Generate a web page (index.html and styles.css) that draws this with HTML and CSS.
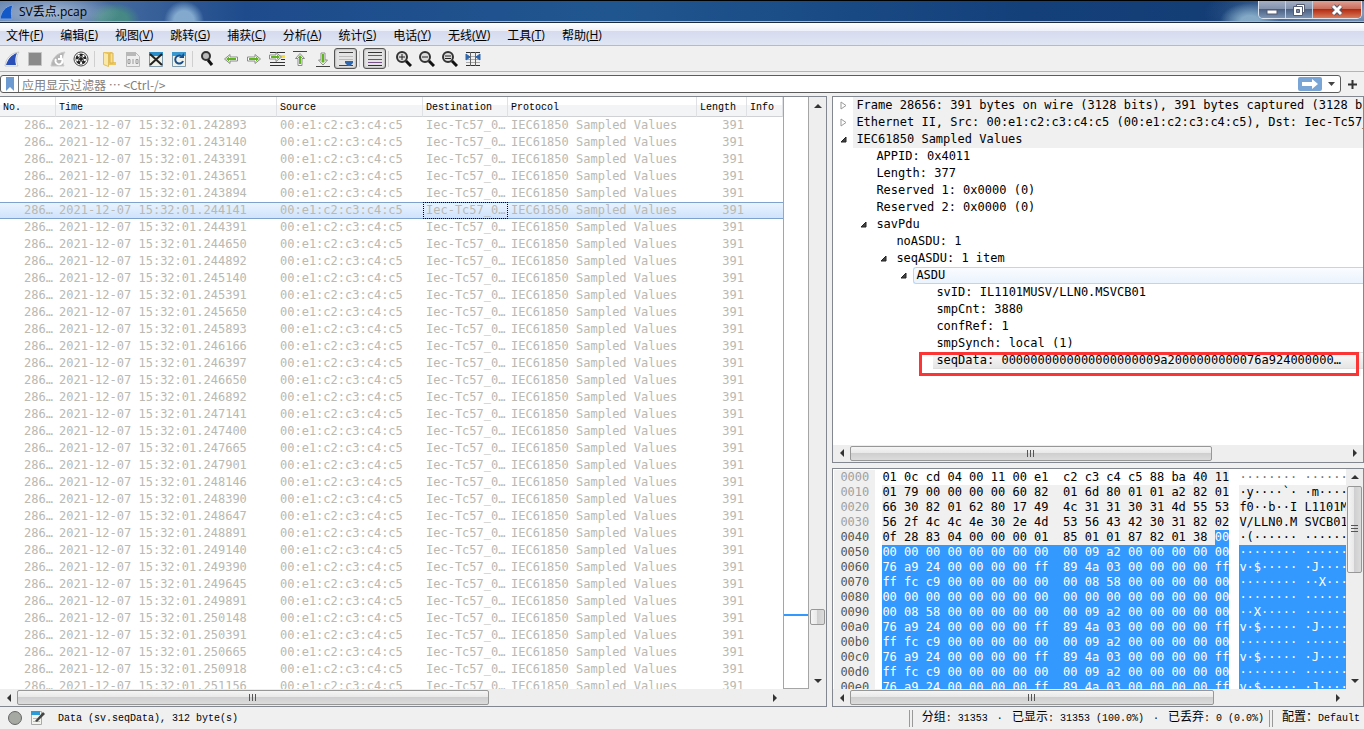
FILE: index.html
```html
<!DOCTYPE html>
<html lang="zh-CN">
<head>
  <meta charset="UTF-8">
  <title>SV丢点.pcap</title>
  <link rel="stylesheet" href="styles.css">
</head>
<body>

  <header class="titlebar">
    <svg class="app-icon" width="14" height="16" viewBox="0 0 14 16"><path d="M0 15C1 8 5 2 13 1c-2 4-2 9-1 14z" fill="#1459c8" stroke="#7fa3dc"/></svg>
    <h1 class="title">SV丢点.pcap</h1>
    <div class="window-buttons">
      <button class="win-btn" aria-label="最小化"><svg width="12" height="12"><rect x="1" y="6" width="10" height="4" fill="#fff" stroke="#555b70"/></svg></button>
      <button class="win-btn" aria-label="还原"><svg width="14" height="14"><path d="M4.500 1.500h8v8h-8z" fill="#fff" stroke="#555b70"/><path d="M1.500 3.500h9v9h-9z" fill="#fff" stroke="#555b70"/><path d="M4.500 6.500h3v3h-3z" fill="#7f8aa5" stroke="#555b70"/></svg></button>
      <button class="win-btn win-close" aria-label="关闭"><svg width="14" height="12"><path d="M3 2l8 8M11 2l-8 8" stroke="#555b70" stroke-width="5"/><path d="M3 2l8 8M11 2l-8 8" stroke="#fff" stroke-width="3"/></svg></button>
    </div>
  </header>

  <nav class="menubar">
    <button>文件(<u>F</u>)</button>
    <button>编辑(<u>E</u>)</button>
    <button>视图(<u>V</u>)</button>
    <button>跳转(<u>G</u>)</button>
    <button>捕获(<u>C</u>)</button>
    <button>分析(<u>A</u>)</button>
    <button>统计(<u>S</u>)</button>
    <button>电话(<u>Y</u>)</button>
    <button>无线(<u>W</u>)</button>
    <button>工具(<u>T</u>)</button>
    <button>帮助(<u>H</u>)</button>
  </nav>

  <div class="toolbar">
    <button aria-label="开始捕获"><svg width="16" height="16"><path d="M1 15C2 8 6 2 15 1c-3 4-3 10-1 14z" fill="#fff" stroke="#c9c9c9"/><path d="M2 14C4 8 7 4 13 2c-2 4-2 8-1 12z" fill="#2a50b8"/></svg></button>
    <button aria-label="停止捕获"><svg width="16" height="16"><path d="M1.500 1.500h13v13h-13z" fill="#8a8a8a" stroke="#c4c4c4"/></svg></button>
    <button aria-label="重新开始捕获"><svg width="16" height="16"><path d="M1 15C2 8 6 2 15 1c-3 4-3 10-1 14z" fill="#b5b5b5" stroke="#c9c9c9"/><path d="M6 8a3.500 3.500 0 1 0 5-1M11 4v4h-3" fill="none" stroke="#fff" stroke-width="2"/></svg></button>
    <button aria-label="捕获选项"><svg width="16" height="16"><circle cx="8" cy="8" r="7" fill="#fff" stroke="#444"/><circle cx="8" cy="8" r="4" fill="none" stroke="#222" stroke-width="3"/><circle cx="8" cy="8" r="4" fill="none" stroke="#fff" stroke-width="2" stroke-dasharray="2 3"/><circle cx="8" cy="8" r="2" fill="#222"/></svg></button>
    <i class="sep"></i>
    <button aria-label="打开"><svg width="16" height="16"><path d="M2 1h8v3h1v7h3v3H2z" fill="#ecc75f"/><path d="M8 2h3v10H8z" fill="#f7e08d" stroke="#dcb24c"/><path d="M1.500 1.500l5 1v13l-5-2z" fill="#fae9a6" stroke="#e2bd5b"/></svg></button>
    <button aria-label="保存"><svg width="16" height="16"><path d="M1.500 1.500h9l4 4v10h-13z" fill="#eee" stroke="#bbb"/><path d="M1 1h10v4H1z" fill="#b8b8b8"/><path d="M3 8.500h2v4H3zM11 8.500h2v4h-2zM8 8v5" fill="none" stroke="#9a9a9a"/></svg></button>
    <button aria-label="关闭文件"><svg width="16" height="16"><path d="M1.500 1.500h13v14h-13z" fill="#f0f2e8" stroke="#7d99aa"/><path d="M1 1h14v4H1z" fill="#2b8ec9"/><path d="M2 3l12 11M14 3L2 14" stroke="#222" stroke-width="2"/></svg></button>
    <button aria-label="重新加载"><svg width="16" height="16"><path d="M1.500 1.500h13v14h-13z" fill="#f0f2e8" stroke="#7d99aa"/><path d="M1 1h14v4H1z" fill="#3b98cf"/><path d="M12 10a4 4 0 1 1-2-5" fill="none" stroke="#174f8f" stroke-width="2"/><path d="M8 7h5V2z" fill="#174f8f"/></svg></button>
    <i class="sep"></i>
    <button aria-label="查找"><svg width="16" height="16"><circle cx="6" cy="5" r="4" fill="#bbb" stroke="#333" stroke-width="2"/><path d="M8 9l4 5" stroke="#111" stroke-width="3"/></svg></button>
    <button aria-label="后退"><svg width="16" height="16"><path d="M1.500 8L7 3.500V6h7.500v4H7v2.500z" fill="#fff" stroke="#8b8b8b"/><path d="M3 8l3-2.500V7h7v2H6v1.500z" fill="#5fb51e"/></svg></button>
    <button aria-label="前进"><svg width="16" height="16"><path d="M14.500 8L9 3.500V6H1.500v4H9v2.500z" fill="#fff" stroke="#8b8b8b"/><path d="M13 8l-3-2.500V7H3v2h7v1.500z" fill="#5fb51e"/></svg></button>
    <button aria-label="跳转到分组"><svg width="18" height="16"><path d="M2 1.500h15M2 11.500h15M2 14.500h15M13 8.500h4" stroke="#333"/><path d="M12 4h5v3h-5z" fill="#f4dc3c"/><path d="M13.500 6L8 1.500V4H1.500v4H8v2.500z" fill="#fff" stroke="#8b8b8b"/><path d="M12 6L9 3.500V5H3v2h6v1.500z" fill="#5fb51e"/></svg></button>
    <button aria-label="首个分组"><svg width="16" height="16"><path d="M1 .5h14" stroke="#444"/><path d="M8 2.500L3.500 7.500H6v7h4v-7h2.500z" fill="#fff" stroke="#8b8b8b"/><path d="M8 4L5.500 7H7v6h2V7h1.500z" fill="#5fb51e"/></svg></button>
    <button aria-label="最后分组"><svg width="16" height="16"><path d="M1 15.500h14" stroke="#444"/><path d="M8 14L3.500 9H6V2h4v7h2.500z" fill="#fff" stroke="#8b8b8b"/><path d="M8 12L5.500 9.500H7V3h2v6.500h1.500z" fill="#5fb51e"/></svg></button>
    <button class="pressed" aria-label="自动滚动"><svg width="16" height="16"><path d="M1 5.500h14M1 8.500h14" stroke="#bbb"/><path d="M1 1.500h14M1 14.500h14" stroke="#444"/><path d="M7 10h8v2l-3 3h-2l-3-3z" fill="#2e66ad"/></svg></button>
    <i class="sep"></i>
    <button class="pressed" aria-label="着色"><svg width="16" height="16"><path d="M1 1.500h14M1 14.500h14" stroke="#333"/><path d="M1 4.500h14" stroke="#e22a2a"/><path d="M1 8.500h14" stroke="#3c5fae"/><path d="M1 11.500h14" stroke="#79528a"/></svg></button>
    <i class="sep"></i>
    <button aria-label="放大"><svg width="16" height="16"><circle cx="6" cy="6" r="5" fill="#ddd" stroke="#333" stroke-width="2"/><path d="M10 10l5 5" stroke="#111" stroke-width="3"/><path d="M3 6h6M6 3v6" stroke="#222"/></svg></button>
    <button aria-label="缩小"><svg width="16" height="16"><circle cx="6" cy="6" r="5" fill="#ddd" stroke="#333" stroke-width="2"/><path d="M10 10l5 5" stroke="#111" stroke-width="3"/><path d="M3 6h6" stroke="#222"/></svg></button>
    <button aria-label="普通大小"><svg width="16" height="16"><circle cx="6" cy="6" r="5" fill="#ddd" stroke="#333" stroke-width="2"/><path d="M10 10l5 5" stroke="#111" stroke-width="3"/><path d="M3 5h6M3 7.500h6" stroke="#222"/></svg></button>
    <button aria-label="调整列宽"><svg width="16" height="16"><path d="M1 1.500h14M1 14.500h14" stroke="#333"/><path d="M1 5.500h14M1 8.500h14M1 11.500h14" stroke="#aaa"/><path d="M5.500 1v14M10.500 1v14" stroke="#666"/><path d="M1 3l4 3-4 3zM15 3l-4 3 4 3z" fill="#2e66ad" stroke="#2e66ad"/></svg></button>
  </div>

  <div class="filterbar">
    <div class="filter-box">
      <button class="bookmark" aria-label="书签"><svg width="10" height="14"><path d="M1 0h8v14l-4-4-4 4z" fill="#6d9bd1"/></svg></button>
      <input type="text" aria-label="显示过滤器" placeholder="应用显示过滤器 ⋯ &lt;Ctrl-/&gt;">
      <button class="apply" aria-label="应用"><svg width="16" height="10"><path d="M0 3h10V0l6 5-6 5V7H0z" fill="#fff"/></svg></button>
      <button class="drop" aria-label="历史"><svg width="7" height="4"><path d="M0 0h7L3.500 4z" fill="#444"/></svg></button>
    </div>
    <button class="add" aria-label="添加"><svg width="9" height="9"><path d="M4.500 0v9M0 4.500h9" stroke="#333" stroke-width="2"/></svg></button>
  </div>

  <main class="panes">
    <section class="pane packet-pane">
      <div class="packet-main">
        <div class="packet-scroll">
          <table class="packets">
            <colgroup>
              <col class="c-no"><col class="c-time"><col class="c-src"><col class="c-dst"><col class="c-proto"><col class="c-len"><col>
            </colgroup>
            <thead>
              <tr><th>No.</th><th>Time</th><th>Source</th><th>Destination</th><th>Protocol</th><th>Length</th><th>Info</th></tr>
            </thead>
            <tbody id="packetRows"></tbody>
          </table>
        </div>
        <div class="minimap"><i class="minimap-mark"></i></div>
        <div class="vscroll packets-vscroll"><i class="arrow up"></i><i class="thumb"></i><i class="arrow down"></i></div>
      </div>
      <div class="hscroll packets-hscroll"><i class="arrow left"></i><i class="track"><i class="thumb"></i></i><i class="arrow right"></i></div>
    </section>

    <div class="right-col">
      <section class="pane tree-pane">
        <div class="tree" id="tree"></div>
        <div class="hscroll tree-hscroll"><i class="arrow left"></i><i class="track"><i class="thumb"></i></i><i class="arrow right"></i></div>
      </section>

      <section class="pane hex-pane">
        <div class="hex-main">
          <div class="hex" id="hex"></div>
          <div class="vscroll hex-vscroll"><i class="arrow up"></i><i class="thumb"></i><i class="arrow down"></i></div>
        </div>
        <div class="hscroll hex-hscroll"><i class="arrow left"></i><i class="track"><i class="thumb"></i></i><i class="arrow right"></i></div>
      </section>
    </div>
  </main>

  <footer class="statusbar">
    <button class="expert" aria-label="专家信息"></button>
    <button class="comment" aria-label="注释"><svg width="16" height="16"><path d="M1.500 1.500h10v13h-10z" fill="#f4f4ee" stroke="#a9a9a9"/><path d="M1 1h9v4H1z" fill="#2f9bd6"/><path d="M3 8.500h5M3 11.500h7" stroke="#bbb"/><path d="M5 11l8-9 2 2-8 8z" fill="#444"/></svg></button>
    <span class="status-text">Data (sv.seqData), 312 byte(s)</span>
    <span class="status-cell"><b>分组</b>: 31353 <i class="dot">·</i> <b>已显示</b>: 31353 (100.0%) <i class="dot">·</i> <b>已丢弃</b>: 0 (0.0%)</span>
    <span class="status-cell"><b>配置：</b>Default</span>
  </footer>

  <script src="script.js"></script>
</body>
</html>
```
FILE: styles.css
```css
*,
*::before,
*::after {
  box-sizing: border-box;
}

body {
  margin: 0;
  height: 100vh;
  display: flex;
  flex-direction: column;
  overflow: hidden;
  background: #f0f0f0;
  color: #000;
  font-family: "Open Sans", "Noto Sans CJK SC", sans-serif;
  font-size: 12px;
}

button {
  padding: 0;
  border: none;
  background: none;
  color: inherit;
  font: inherit;
  display: flex;
  align-items: center;
  justify-content: center;
}

svg {
  display: block;
  flex: none;
}

/* Title bar */
.titlebar {
  flex: none;
  height: 23px;
  display: flex;
  align-items: center;
  border-top: 1px solid #000;
  border-bottom: 1px solid #1d2b40;
  background:
    radial-gradient(ellipse 70px 20px at 50px 12px, rgba(190, 205, 225, 0.8), transparent),
    radial-gradient(ellipse 26px 16px at 114px 18px, rgba(70, 140, 130, 0.9) 50%, transparent),
    radial-gradient(ellipse 20px 20px at 184px 20px, rgba(140, 178, 212, 0.9) 50%, transparent),
    radial-gradient(ellipse 30px 18px at 1250px 20px, rgba(140, 178, 205, 0.9) 30%, transparent),
    radial-gradient(ellipse 160px 40px at 100% 12px, #7f9cc0, transparent),
    linear-gradient(to right, #6382ad, #1e4b8c 18%, #20568f 45%, #14407a 75%, #123a70);
  box-shadow: inset 0 -1px #9fb9da;
}

.title {
  flex: 1;
  margin: 0 0 0 5px;
  font-size: 12px;
  font-weight: normal;
  line-height: 20px;
}

.window-buttons {
  display: flex;
  align-self: flex-start;
  height: 18px;
  margin-right: 2px;
  border: 1px solid #dbe4ef;
  border-top: none;
  border-radius: 0 0 5px 5px;
  overflow: hidden;
}

.win-btn {
  width: 27px;
  border-right: 1px solid #c5d0e0;
  background: linear-gradient(#a3afc4, #8493ae 45%, #4d6285 50%, #7b93b4);
}

.win-close {
  width: 48px;
  border-right: none;
  background: linear-gradient(#dca196, #cc6e5c 45%, #b32c12 50%, #d97a5a);
}

/* Menu */
.menubar {
  flex: none;
  height: 23px;
  display: flex;
  gap: 17px;
  padding: 1px 6px 0;
  border-bottom: 1px solid #b5b9cf;
  background: linear-gradient(#fff, #eef1f9 35%, #d5dbee 36%, #e1e6f5);
}

/* Toolbar */
.toolbar {
  flex: none;
  height: 26px;
  display: flex;
  align-items: center;
  border-bottom: 1px solid #b4b4b4;
}

.toolbar button {
  width: 23px;
  height: 21px;
}

.toolbar .pressed {
  border: 1px solid #555;
  border-radius: 3px;
  background: #e4e4e4;
  box-shadow: inset 0 0 2px #777;
}

.sep {
  width: 6px;
  height: 16px;
  background: linear-gradient(#cfcfcf, #cfcfcf) 2px 0 / 1px 100% no-repeat;
}

/* Display filter */
.filterbar {
  flex: none;
  height: 24px;
  display: flex;
  align-items: center;
}

.filter-box {
  flex: 1;
  height: 18px;
  display: flex;
  align-items: center;
  border: 1px solid #5c5c5c;
  border-radius: 3px;
  background: #fff;
}

.filter-box input {
  flex: 1;
  height: 16px;
  padding: 0 3px;
  border: none;
  outline: none;
  background: none;
  font-family: "Noto Sans CJK SC", sans-serif;
  font-size: 12px;
}

.filter-box input::placeholder {
  color: #808080;
}

.bookmark {
  width: 18px;
  height: 16px;
  border-right: 1px solid #777;
}

.apply {
  width: 24px;
  height: 14px;
  border-radius: 2px;
  background: #79a5d6;
}

.drop {
  width: 18px;
}

.add {
  width: 23px;
}

/* Panes */
.panes {
  flex: 1;
  min-height: 0;
  display: flex;
  gap: 5px;
}

.pane {
  display: flex;
  flex-direction: column;
  min-width: 0;
  min-height: 0;
  border: 1px solid #828790;
  background: #fff;
  font-family: "DejaVu Sans Mono", "Noto Sans CJK SC", monospace;
  overflow: hidden;
}

.packet-pane {
  flex: 827 1 0;
  border-left: none;
}

.right-col {
  flex: 532 1 0;
  min-width: 0;
  display: flex;
  flex-direction: column;
  gap: 5px;
}

.tree-pane {
  flex: 367 1 0;
}

.hex-pane {
  flex: 239 1 0;
}

/* Packet list */
.packet-main {
  flex: 1;
  min-height: 0;
  display: flex;
  background: #f0f0f0;
}

.packet-scroll {
  flex: 1;
  min-width: 0;
  overflow: hidden;
  background: #fff;
}

.packets {
  width: 100%;
  table-layout: fixed;
  border-collapse: separate;
  border-spacing: 0;
  color: #b9b9b2;
}

.c-no { width: 56px; }
.c-time { width: 221px; }
.c-src { width: 146px; }
.c-dst { width: 85px; }
.c-proto { width: 189px; }
.c-len { width: 50px; }

.packets th {
  height: 20px;
  padding: 2px 0 0 3px;
  border-right: 1px solid #dfe1e4;
  border-bottom: 1px solid #cfd1d4;
  background: linear-gradient(#fff 40%, #f3f4f6 41%);
  color: #000;
  font-family: "Liberation Mono", monospace;
  font-size: 10px;
  font-weight: normal;
  text-align: left;
}

.packets td {
  height: 17px;
  padding: 0 3px;
  font-size: 12px;
  line-height: 15px;
  white-space: nowrap;
  overflow: hidden;
  border: solid transparent;
  border-width: 1px 0;
}

.packets td:nth-child(1),
.packets td:nth-child(6) {
  text-align: right;
}

.packets .selected td {
  border-color: #7da2ce;
  background: linear-gradient(#eaf3fe, #cfe3fc);
}

.packets .selected .current {
  outline: 1px dotted #000;
  outline-offset: -1px;
}

.minimap {
  width: 26px;
  padding-top: 517px;
  border: 1px solid #a5a5a5;
  border-top: none;
  background: #fff;
}

.minimap-mark {
  display: block;
  height: 2px;
  background: #3399ff;
}

/* Scroll bars */
.vscroll {
  width: 17px;
  display: flex;
  flex-direction: column;
  align-items: center;
  background: #eee;
}

.hscroll {
  flex: none;
  height: 17px;
  display: flex;
  align-items: center;
  background: #eee;
}

.arrow {
  flex: none;
  width: 17px;
  height: 17px;
  display: flex;
  align-items: center;
  justify-content: center;
}

.arrow::before {
  content: "";
  border: 4px solid transparent;
}

.arrow.up::before { border-top: none; border-bottom-color: #333; }
.arrow.down::before { border-bottom: none; border-top-color: #333; }
.arrow.left::before { border-left: none; border-right-color: #333; }
.arrow.right::before { border-right: none; border-left-color: #333; }

.arrow.down {
  margin-top: auto;
}

.track {
  flex: 1;
  height: 15px;
}

.thumb {
  display: flex;
  align-items: center;
  justify-content: center;
  border: 1px solid #979797;
  border-radius: 2px;
}

.hscroll .thumb {
  height: 15px;
  background: linear-gradient(#f5f5f5, #e8e8e8 48%, #cfcfd1 50%, #dcdcdc);
}

.vscroll .thumb {
  width: 15px;
  background: linear-gradient(to right, #f5f5f5, #e8e8e8 48%, #cfcfd1 50%, #dcdcdc);
}

.hscroll .thumb::before {
  content: "";
  width: 8px;
  height: 7px;
  background: repeating-linear-gradient(to right, #555 0 1px, transparent 1px 3px);
}

.hex-vscroll .thumb::before {
  content: "";
  width: 7px;
  height: 8px;
  background: repeating-linear-gradient(#555 0 1px, transparent 1px 3px);
}

.packets-hscroll { padding-right: 43px; }
.packets-hscroll .thumb { width: 63%; }
.packets-vscroll .thumb { height: 16px; margin-top: 495px; }
.tree-hscroll .thumb { width: 73%; }
.hex-hscroll { padding-right: 17px; }
.hex-hscroll .thumb { width: 76%; }
.hex-vscroll .thumb { height: 87px; }

/* Packet details */
.tree {
  flex: 1;
  min-height: 0;
  overflow: hidden;
  padding-left: 1px;
}

.node {
  position: relative;
  display: flex;
  height: 17px;
  font-size: 12px;
  line-height: 17px;
  white-space: pre;
}

.node.l1 { padding-left: 20px; }
.node.l2 { padding-left: 40px; }
.node.l3 { padding-left: 60px; }
.node.l4 { padding-left: 80px; }

.twisty {
  flex: none;
  width: 19px;
  height: 17px;
  display: flex;
  align-items: center;
  justify-content: center;
}

.label {
  flex: 1;
  min-width: 0;
  padding-left: 3px;
  overflow: hidden;
}

.proto .label {
  background: #f0f0f0;
}

.hover .label {
  border: 1px solid #b8d6fb;
  border-right: none;
  border-radius: 3px 0 0 3px;
  padding-left: 2px;
  line-height: 15px;
  background: linear-gradient(#fafcff, #ebf3fd);
}

.current-field .label {
  border: solid #dedede;
  border-width: 1px 0;
  line-height: 15px;
  background: linear-gradient(#fafafa, #e5e5e5);
  text-overflow: ellipsis;
  padding-right: 17px;
}

/* red frame round the field in question */
.current-field::after {
  content: "";
  position: absolute;
  left: 85px;
  right: 4px;
  top: 0;
  height: 24px;
  border: 3px solid #fb3535;
}

/* Bytes */
.hex-main {
  flex: 1;
  min-height: 0;
  display: flex;
}

.hex {
  flex: 1;
  min-width: 0;
  overflow: hidden;
  font-size: 12px;
  line-height: 15px;
  white-space: pre;
  padding: 1px 0 0 1px;
}

.hex-row {
  display: flex;
  height: 15px;
}

.offset {
  flex: none;
  width: 41px;
  padding-left: 6px;
  background: #f0f0f0;
  color: #555;
}

.offset.dim {
  color: #a0a0a0;
}

.bytes {
  flex: none;
  width: 364px;
  padding-left: 7px;
}

.ascii {
  flex: 1;
  min-width: 0;
  overflow: hidden;
}

.field {
  display: inline-block;
  background: #f0f0f0;
}

.picked {
  display: inline-block;
  background: #3399ff;
  color: #fff;
}

.ascii.field,
.ascii.picked {
  display: block;
}

.ascii.plain {
  color: #777;
}

/* Status bar */
.statusbar {
  flex: none;
  height: 22px;
  display: flex;
  align-items: center;
  padding: 0 4px 0 8px;
  font-family: "Liberation Mono", "Noto Sans CJK SC", monospace;
  font-size: 10px;
  white-space: nowrap;
}

.statusbar b {
  font-size: 12px;
  font-weight: normal;
}

.dot {
  display: inline-block;
  width: 12px;
  font-style: normal;
  text-align: center;
}

.expert {
  width: 14px;
  height: 14px;
  border: 1px solid #666;
  border-radius: 50%;
  background: #a5a9a2;
}

.comment {
  margin-left: 8px;
}

.status-text {
  flex: 1;
  margin-left: 12px;
}

.status-cell {
  padding-left: 9px;
  margin-left: 5px;
  line-height: 17px;
  border-left: 4px double #999;
}
```
FILE: script.js
```js
const times = [
  "242893", "243140", "243391", "243651", "243894", "244141", "244391", "244650", "244892",
  "245140", "245391", "245650", "245893", "246166", "246397", "246650", "246892", "247141",
  "247400", "247665", "247901", "248146", "248390", "248647", "248891", "249140", "249390",
  "249645", "249891", "250148", "250391", "250665", "250918", "251156"
];
const selectedRow = 5;

document.getElementById("packetRows").innerHTML = times.map((t, i) => `
  <tr class="${i === selectedRow ? "selected" : ""}">
    <td>286…</td><td>2021-12-07 15:32:01.${t}</td><td>00:e1:c2:c3:c4:c5</td>
    <td class="${i === selectedRow ? "current" : ""}">Iec-Tc57_0…</td><td>IEC61850 Sampled Values</td><td>391</td><td></td>
  </tr>`).join("");

// level, state, text, extra class
const nodes = [
  [0, "closed", "Frame 28656: 391 bytes on wire (3128 bits), 391 bytes captured (3128 bits)", "proto"],
  [0, "closed", "Ethernet II, Src: 00:e1:c2:c3:c4:c5 (00:e1:c2:c3:c4:c5), Dst: Iec-Tc57_04", "proto"],
  [0, "open", "IEC61850 Sampled Values", "proto"],
  [1, "", "APPID: 0x4011", ""],
  [1, "", "Length: 377", ""],
  [1, "", "Reserved 1: 0x0000 (0)", ""],
  [1, "", "Reserved 2: 0x0000 (0)", ""],
  [1, "open", "savPdu", ""],
  [2, "", "noASDU: 1", ""],
  [2, "open", "seqASDU: 1 item", ""],
  [3, "open", "ASDU", "hover"],
  [4, "", "svID: IL1101MUSV/LLN0.MSVCB01", ""],
  [4, "", "smpCnt: 3880", ""],
  [4, "", "confRef: 1", ""],
  [4, "", "smpSynch: local (1)", ""],
  [4, "", "seqData: 0000000000000000000009a2000000000076a92400000000…", "current-field"]
];

const twisties = {
  "": "",
  closed: '<svg width="7" height="9"><path d="M1 1l5 3.500L1 8z" fill="#fff" stroke="#999"/></svg>',
  open: '<svg width="7" height="7"><path d="M6 1v5H1z" fill="#444" stroke="#222"/></svg>'
};

document.getElementById("tree").innerHTML = nodes.map(([level, state, text, cls]) =>
  `<div class="node l${level} ${cls}"><span class="twisty">${twisties[state]}</span><span class="label">${text}</span></div>`
).join("");

const zeros = "00 00 00 00 00 00 00 00  00 00 00 00 00 00 00 00";
const a2 = "00 00 00 00 00 00 00 00  00 09 a2 00 00 00 00 00";
const r76 = "76 a9 24 00 00 00 00 ff  89 4a 03 00 00 00 00 ff";
const dots = "········ ········";
const v = "v·$····· ·J······";

const dump = [
  ["01 0c cd 04 00 11 00 e1  c2 c3 c4 c5 88 ba <span class=\"field\">40 11</span>", "········ ······(·", "plain"],
  ["01 79 00 00 00 00 60 82  01 6d 80 01 01 a2 82 01", "·y····`· ·m······", "field"],
  ["66 30 82 01 62 80 17 49  4c 31 31 30 31 4d 55 53", "f0··b··I L1101MUS", "field"],
  ["56 2f 4c 4c 4e 30 2e 4d  53 56 43 42 30 31 82 02", "V/LLN0.M SVCB01··", "field"],
  ["0f 28 83 04 00 00 00 01  85 01 01 87 82 01 38 <span class=\"picked\">00</span>", "·(······ ······8·", "field"],
  [a2, dots, "picked"],
  [r76, v, "picked"],
  ["ff fc c9 00 00 00 00 00  00 08 58 00 00 00 00 00", "········ ··X·····", "picked"],
  [zeros, dots, "picked"],
  ["00 08 58 00 00 00 00 00  00 09 a2 00 00 00 00 00", "··X····· ········", "picked"],
  [r76, v, "picked"],
  ["ff fc c9 00 00 00 00 00  00 09 a2 00 00 00 00 00", dots, "picked"],
  [r76, v, "picked"],
  ["ff fc c9 00 00 00 00 00  00 09 a2 00 00 00 00 00", dots, "picked"],
  [r76, v, "picked"]
];

document.getElementById("hex").innerHTML = dump.map(([bytes, ascii, cls], i) => {
  const offset = (i * 16).toString(16).padStart(4, "0");
  return `<div class="hex-row"><span class="offset ${i < 4 ? "dim" : ""}">${offset}</span>` +
    `<span class="bytes"><span class="${cls}">${bytes}</span></span>` +
    `<span class="ascii ${cls}">${ascii}</span></div>`;
}).join("");
```
